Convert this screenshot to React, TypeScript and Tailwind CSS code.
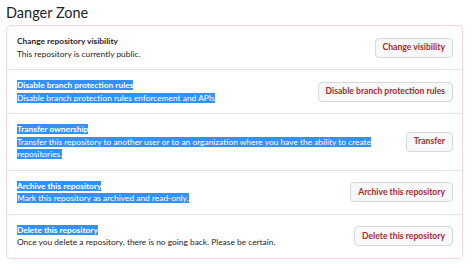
import React from "react";

const SEL = "bg-[#3390ff] text-white";

function Btn({ children }: { children: React.ReactNode }) {
  return (
    <button className="shrink-0 h-[20px] px-[7px] rounded-[4px] border border-[#d5d8dc] bg-[#f6f8fa] text-[#b3262e] font-bold text-[8.6px] leading-none whitespace-nowrap">
      {children}
    </button>
  );
}

function Row({
  title,
  desc,
  btn,
  first,
}: {
  title: React.ReactNode;
  desc: React.ReactNode;
  btn: string;
  first?: boolean;
}) {
  return (
    <div
      className={
        "flex items-center justify-between gap-4 pl-[10px] pr-[9px] py-[9px] " +
        (first ? "" : "border-t border-[#e4e4e4]")
      }
    >
      <div className="text-[8.4px] leading-[12.5px] text-[#1f2328] whitespace-nowrap">
        <div className="font-bold">{title}</div>
        <div>{desc}</div>
      </div>
      <Btn>{btn}</Btn>
    </div>
  );
}

export default function App() {
  return (
    <div
      className="w-[474px] h-[268px] bg-white px-[6px] pt-[3px]"
      style={{ fontFamily: "Lato, 'Noto Sans', sans-serif" }}
    >
      <h2 className="text-[14.5px] leading-[20px] text-[#1f2328] mb-[2px]">Danger Zone</h2>
      <div className="w-[457px] rounded-[5px] border border-[#f5d5d8]">
        <Row
          first
          title="Change repository visibility"
          desc="This repository is currently public."
          btn="Change visibility"
        />
        <Row
          title={<span className={SEL}>Disable branch protection rules </span>}
          desc={<span className={SEL}>Disable branch protection rules enforcement and APIs</span>}
          btn="Disable branch protection rules"
        />
        <Row
          title={<span className={SEL}>Transfer ownership </span>}
          desc={
            <span className={SEL}>
              Transfer this repository to another user or to an organization where you have the ability to create
              <br />
              repositories.
            </span>
          }
          btn="Transfer"
        />
        <Row
          title={<span className={SEL}>Archive this repository </span>}
          desc={<span className={SEL}>Mark this repository as archived and read-only. </span>}
          btn="Archive this repository"
        />
        <Row
          title={<span className={SEL}>Delete this repository</span>}
          desc="Once you delete a repository, there is no going back. Please be certain."
          btn="Delete this repository"
        />
      </div>
    </div>
  );
}
